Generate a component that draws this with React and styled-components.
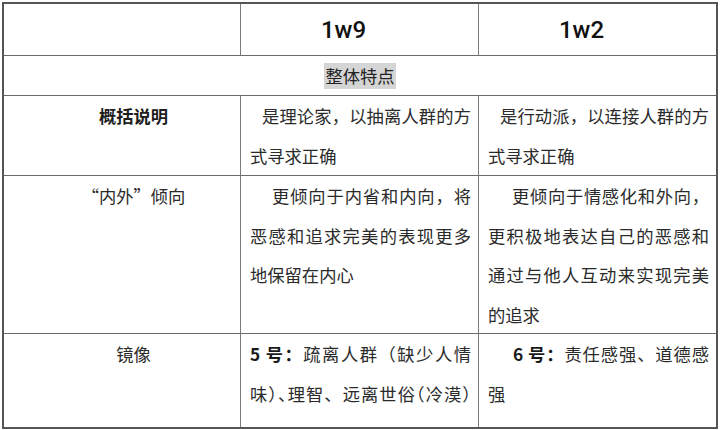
import React from "react";
import styled, { createGlobalStyle } from "styled-components";

const Global = createGlobalStyle`
  html, body { margin: 0; padding: 0; background: #ffffff; }
  body { font-family: "Noto Sans CJK SC", "Noto Sans", sans-serif; color: #2b2b2b; }
`;

const Page = styled.div`
  padding: 2px;
  width: 720px;
  height: 430px;
  box-sizing: border-box;
  overflow: hidden;
`;

const Table = styled.div`
  display: grid;
  grid-template-columns: 237px 238px 1fr;
  grid-template-rows: 52px 40px 80px 158px 93px;
  width: 716px;
  box-sizing: border-box;
  border: 2px solid #555;
`;

const Cell = styled.div`
  box-sizing: border-box;
  border-right: ${(p) => (p.$last ? "none" : "1px solid #7a7a7a")};
  border-bottom: ${(p) => (p.$bottom ? "none" : "1px solid #6a6a6a")};
  min-width: 0;
`;

const HeadCell = styled(Cell)`
  display: flex;
  align-items: center;
  justify-content: center;
  padding-right: 32px;
  font-family: Roboto, "Liberation Sans", sans-serif;
  font-weight: 500;
  font-size: 24px;
  color: #111;
`;

const SectionCell = styled(Cell)`
  grid-column: 1 / span 3;
  display: flex;
  align-items: center;
  justify-content: center;
  border-right: none;
`;

const Highlight = styled.span`
  background: #d5d5d5;
  font-size: 17.3px;
  line-height: 26px;
  padding: 0 1px;
  color: #222;
`;

const LabelCell = styled(Cell)`
  padding-left: 23px;
  text-align: center;
  font-size: 17.3px;
  line-height: 39.5px;
  font-weight: ${(p) => (p.$bold ? 700 : 400)};
  color: ${(p) => (p.$bold ? "#1e1e1e" : "#2b2b2b")};
`;

const TextCell = styled(Cell)`
  padding: 0 7px 0 9px;
  font-size: 17.3px;
  line-height: 39.5px;
  color: #2b2b2b;
`;

const Line = styled.div`
  white-space: nowrap;
  text-indent: ${(p) => p.$indent || 0}px;
  text-align: justify;
  text-align-last: ${(p) => (p.$full ? "justify" : "left")};
`;

const Num = styled.b`
  font-weight: 700;
  color: #1a1a1a;
`;

const Punct = styled.span`
  font-feature-settings: "halt" 1;
`;

const rows = [
  {
    label: "概括说明",
    bold: true,
    a: [
      { t: "是理论家，以抽离人群的方", indent: 12, full: true },
      { t: "式寻求正确" },
    ],
    b: [
      { t: "是行动派，以连接人群的方", indent: 12, full: true },
      { t: "式寻求正确" },
    ],
  },
  {
    label: "“内外”倾向",
    a: [
      { t: "更倾向于内省和内向，将", indent: 22, full: true },
      { t: "恶感和追求完美的表现更多", full: true },
      { t: "地保留在内心" },
    ],
    b: [
      { t: "更倾向于情感化和外向，", indent: 24, full: true },
      { t: "更积极地表达自己的恶感和", full: true },
      { t: "通过与他人互动来实现完美", full: true },
      { t: "的追求" },
    ],
  },
  {
    label: "镜像",
    bottom: true,
    a: [
      { num: "5 号：", t: "疏离人群（缺少人情", full: true },
      {
        full: true,
        node: (
          <>
            味<Punct>）、</Punct>理智、远离世俗<Punct>（</Punct>冷漠<Punct>）</Punct>
          </>
        ),
      },
    ],
    b: [
      { num: "6 号：", t: "责任感强、道德感", indent: 25, full: true },
      { t: "强" },
    ],
  },
];

const renderLines = (lines) =>
  lines.map((l, i) => (
    <Line key={i} $indent={l.indent} $full={l.full}>
      {l.num && <Num>{l.num}</Num>}
      {l.node || l.t}
    </Line>
  ));

export default function App() {
  return (
    <Page lang="zh-CN">
      <Global />
      <Table>
        <Cell />
        <HeadCell>1w9</HeadCell>
        <HeadCell $last>1w2</HeadCell>
        <SectionCell>
          <Highlight>整体特点</Highlight>
        </SectionCell>
        {rows.map((r, i) => (
          <React.Fragment key={i}>
            <LabelCell $bold={r.bold} $bottom={r.bottom}>
              {r.label}
            </LabelCell>
            <TextCell $bottom={r.bottom}>{renderLines(r.a)}</TextCell>
            <TextCell $bottom={r.bottom} $last>
              {renderLines(r.b)}
            </TextCell>
          </React.Fragment>
        ))}
      </Table>
    </Page>
  );
}
